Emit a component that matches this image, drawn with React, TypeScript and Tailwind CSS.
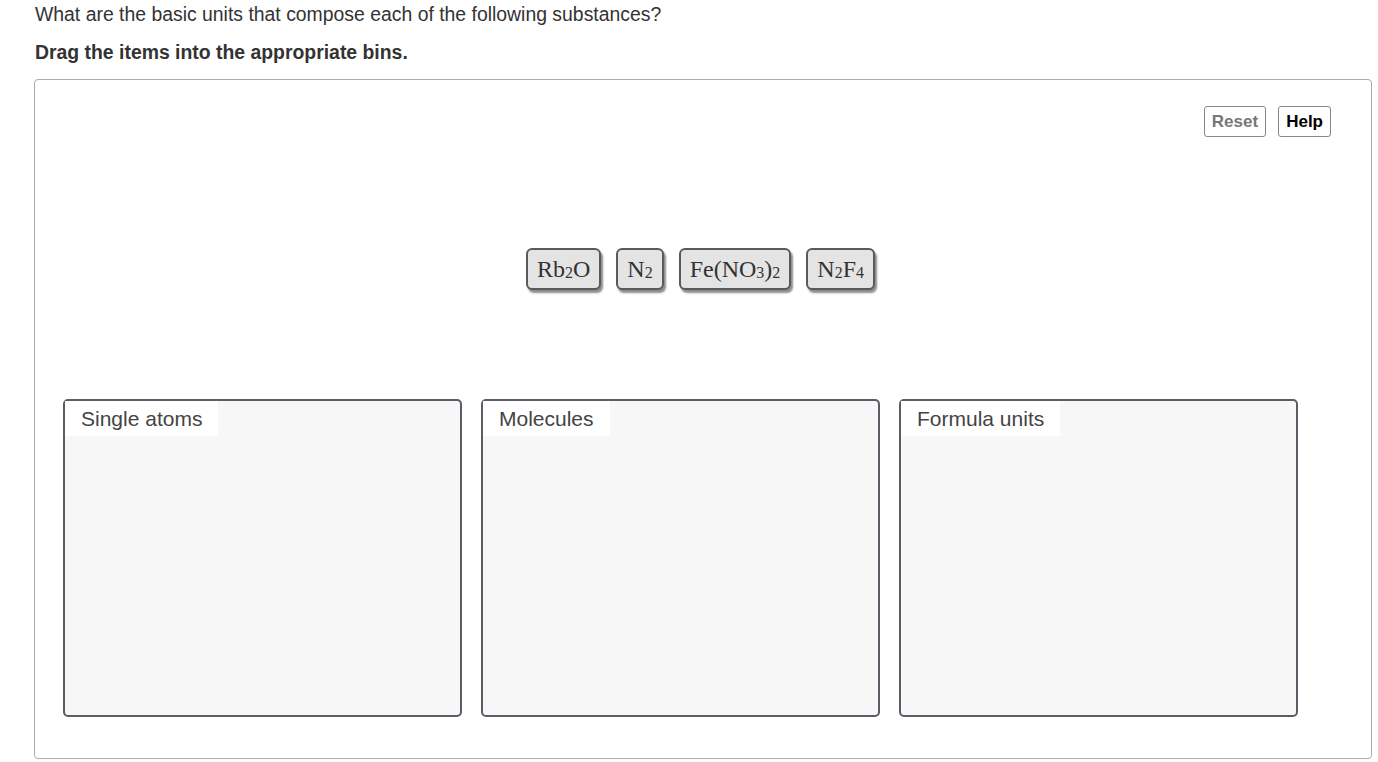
import React from 'react';

type Part = { t: string; sub?: boolean };

const items: { id: string; parts: Part[] }[] = [
  { id: 'rb2o', parts: [{ t: 'Rb' }, { t: '2', sub: true }, { t: 'O' }] },
  { id: 'n2', parts: [{ t: 'N' }, { t: '2', sub: true }] },
  {
    id: 'feno32',
    parts: [{ t: 'Fe(NO' }, { t: '3', sub: true }, { t: ')' }, { t: '2', sub: true }],
  },
  { id: 'n2f4', parts: [{ t: 'N' }, { t: '2', sub: true }, { t: 'F' }, { t: '4', sub: true }] },
];

const bins = ['Single atoms', 'Molecules', 'Formula units'];

function Chip({ parts }: { parts: Part[] }) {
  return (
    <div className="h-[42px] px-[9px] flex items-center rounded-[6px] border-2 border-[#5a5a5a] bg-[#e4e4e4] shadow-[2px_3px_2px_rgba(0,0,0,0.45)] text-[24px] text-[#333] font-['Liberation_Serif',serif] leading-none">
      {parts.map((p, i) =>
        p.sub ? (
          <span key={i} className="text-[16px] relative top-[4px]">
            {p.t}
          </span>
        ) : (
          <span key={i}>{p.t}</span>
        )
      )}
    </div>
  );
}

export default function App() {
  return (
    <div className="bg-white min-h-screen font-['Liberation_Sans',Arial,sans-serif] text-[#333]">
      <div className="pl-[35px] pt-[3px]">
        <p className="text-[19.4px] leading-[22px]">
          What are the basic units that compose each of the following substances?
        </p>
        <p className="text-[19.4px] leading-[22px] font-bold mt-[16px]">
          Drag the items into the appropriate bins.
        </p>
      </div>

      <div className="ml-[34px] mt-[16px] w-[1338px] h-[680px] border border-[#ababab] rounded-[4px] flex flex-col">
        {/* Toolbar */}
        <div className="flex justify-end gap-[12px] pt-[26px] pr-[40px]">
          <button className="h-[31px] px-[7px] border border-[#888] rounded-[3px] bg-white text-[17px] font-bold text-[#777]">
            Reset
          </button>
          <button className="h-[31px] px-[7px] border border-[#888] rounded-[3px] bg-white text-[17px] font-bold text-black">
            Help
          </button>
        </div>

        {/* Draggable items */}
        <div className="flex justify-center gap-[15px] mt-[111px] pr-[5px]">
          {items.map((it) => (
            <Chip key={it.id} parts={it.parts} />
          ))}
        </div>

        {/* Bins */}
        <div className="flex gap-[19px] pl-[28px] mt-[109px]">
          {bins.map((b) => (
            <div
              key={b}
              className="w-[399px] h-[318px] border-2 border-[#5c5c66] rounded-[5px] bg-[#f7f7f7]"
            >
              <div className="inline-block bg-white pl-[16px] pr-[16px] h-[35px] leading-[36px] text-[21px] text-[#444]">
                {b}
              </div>
            </div>
          ))}
        </div>
      </div>
    </div>
  );
}
